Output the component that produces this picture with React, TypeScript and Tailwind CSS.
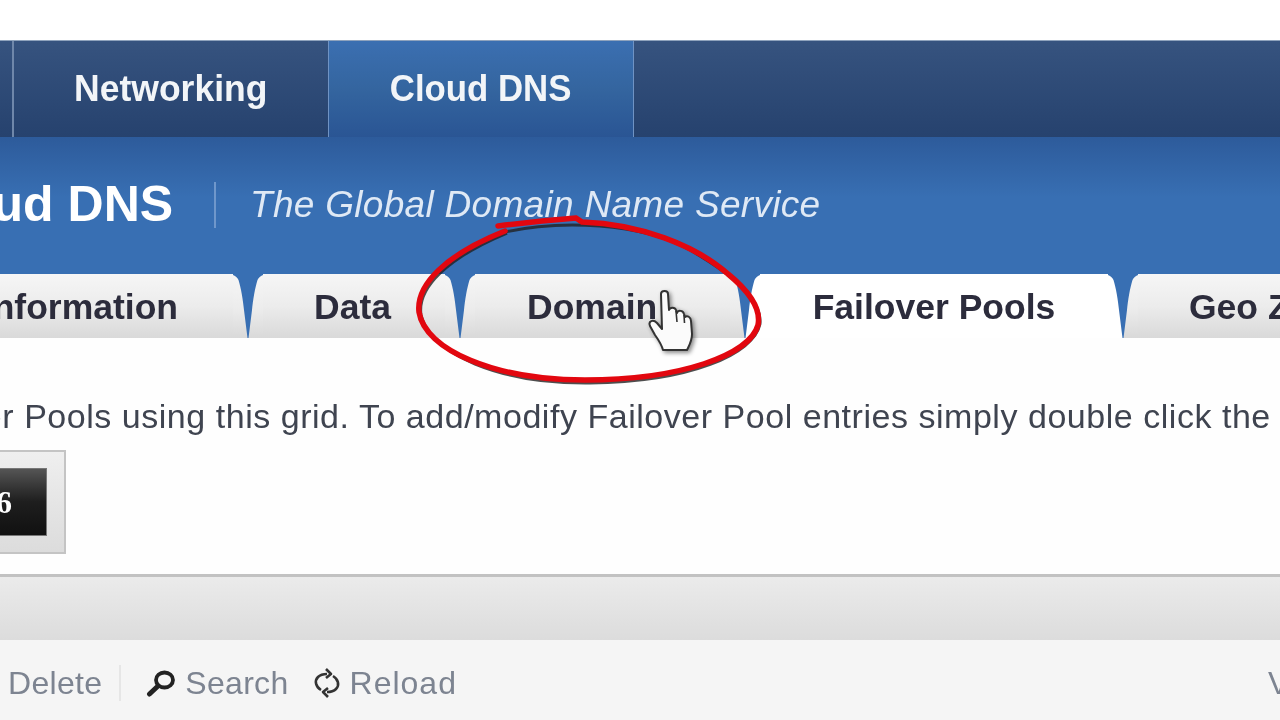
const sans = "font-['Liberation_Sans',Arial,sans-serif]";

function Notch({ left = false, right = false, id }: { left?: boolean; right?: boolean; id: string }) {
  return (
    <svg width="30" height="64" viewBox="0 0 30 64" className="shrink-0 block">
      <defs>
        <linearGradient id={id} x1="0" y1="0" x2="0" y2="1">
          <stop offset="0" stopColor="#f6f6f6" />
          <stop offset="0.55" stopColor="#ececec" />
          <stop offset="1" stopColor="#d9d9d9" />
        </linearGradient>
      </defs>
      <rect x="0" y="0" width="15" height="64" fill={left ? "#ffffff" : `url(#${id})`} />
      <rect x="15" y="0" width="15" height="64" fill={right ? "#ffffff" : `url(#${id})`} />
      <path d="M0 0 H30 V1 C27 2 25.5 4 24.5 6 C22 14 20 26 19 36 L15.5 64 H14.5 L11 36 C10 26 8 14 5.5 6 C4.5 4 3 2 0 1 Z" fill="#386fb3" />
    </svg>
  );
}

function Tab({ label, w, active = false, textClass = "justify-center" }: { label: string; w: string; active?: boolean; textClass?: string }) {
  return (
    <div
      className={`${w} ${textClass} shrink-0 h-16 flex items-center pt-1 whitespace-nowrap text-[35.5px] font-bold text-[#2c2c3c] ${
        active ? "bg-white" : "bg-gradient-to-b from-[#f6f6f6] via-[#ececec] to-[#d9d9d9]"
      }`}
    >
      {label}
    </div>
  );
}

export default function App() {
  return (
    <div className={`${sans} relative w-[1280px] h-[720px] overflow-hidden bg-white flex flex-col blur-[0.5px]`}>
      <div className="h-10 shrink-0 bg-white" />

      {/* top nav */}
      <div className="h-[97px] shrink-0 flex border-t border-[#8fa3bd] bg-gradient-to-b from-[#36537f] to-[#26426e] text-[#f2f5f8] text-[37px] font-bold">
        <div className="w-[14px] shrink-0 border-r-2 border-[#6f87aa]" />
        <div className="w-[314px] shrink-0 flex items-center justify-center">
          <span className="inline-block origin-center scale-x-[0.96] whitespace-nowrap">Networking</span>
        </div>
        <div className="w-[306px] shrink-0 flex items-center justify-center border-x border-[#6f93c4] bg-gradient-to-b from-[#3b6fb1] via-[#34659f] to-[#2a5594]">
          <span className="inline-block origin-center scale-x-[0.94] whitespace-nowrap">Cloud DNS</span>
        </div>
      </div>

      {/* blue header */}
      <div className="h-[201px] shrink-0 flex flex-col bg-gradient-to-b from-[#2d5b9b] via-[#386fb3] via-30% to-[#386fb3]">
        <div className="flex-1 flex items-center whitespace-nowrap text-white -translate-y-[1px]">
          <span className="-ml-[88px] text-[50px] font-bold w-[302px] shrink-0">Cloud DNS</span>
          <span className="w-[2px] h-[46px] bg-[#6f97cb] shrink-0" />
          <span className="ml-[34px] text-[37px] italic tracking-[0.3px] text-[#dfe9f5]">The Global Domain Name Service</span>
        </div>
        {/* tabs */}
        <div className="h-16 shrink-0 flex">
          <Tab label="Basic Information" w="w-[233px]" textClass="justify-end pr-[55px]" />
          <Notch id="n1" />
          <Tab label="Data" w="w-[182px]" textClass="justify-center pr-[3px]" />
          <Notch id="n2" />
          <Tab label="Domain" w="w-[255px]" textClass="justify-start pl-[52px]" />
          <Notch id="n3" right />
          <Tab label="Failover Pools" w="w-[348px]" active />
          <Notch id="n4" left />
          <Tab label="Geo Zones" w="w-[200px]" textClass="justify-start pl-[51px]" />
        </div>
      </div>

      {/* content */}
      <div className="h-[236px] shrink-0 bg-[#fefefe] flex flex-col">
        <p className="mt-[56px] -ml-[111px] whitespace-nowrap text-[34px] leading-[44px] text-[#3f4450] tracking-[0.53px]">
          Failover Pools using this grid. To add/modify Failover Pool entries simply double click the
        </p>
        <div className="mt-[12px] w-[66px] h-[104px] box-border border-2 border-l-0 border-[#c4c4c4] bg-gradient-to-b from-[#efefef] to-[#dcdcdc] flex items-center justify-end pr-[17px]">
          <div className="w-[47px] h-[68px] shrink-0 bg-gradient-to-b from-[#555555] via-[#1e1e1e] to-[#111111] border border-[#777] border-l-0 flex items-center overflow-hidden">
            <span className="-ml-[20px] font-['Liberation_Serif',serif] text-[32px] font-bold text-white">36</span>
          </div>
        </div>
      </div>

      {/* grid header */}
      <div className="h-[66px] shrink-0 border-t-[3px] border-[#c2c2c2] bg-gradient-to-b from-[#ebebeb] to-[#dcdcdc]" />

      {/* toolbar */}
      <div className="h-20 shrink-0 bg-[#f5f5f5] flex items-center text-[32px] text-[#7d8491] pt-[6px] whitespace-nowrap">
        <span className="ml-[8px] tracking-[0.3px]">Delete</span>
        <span className="ml-[17px] w-[2px] h-[36px] bg-[#e6e6e6] shrink-0" />
        <svg width="30" height="30" viewBox="0 0 30 30" className="ml-[25px] shrink-0" fill="none">
          <ellipse cx="18.5" cy="12" rx="8.5" ry="7.5" stroke="#222" strokeWidth="3.8" />
          <path d="M12 18 L3.5 26" stroke="#222" strokeWidth="5" strokeLinecap="round" />
        </svg>
        <span className="ml-[9px] tracking-[0.3px]">Search</span>
        <svg width="30" height="32" viewBox="0 0 30 32" className="ml-[23px] shrink-0" fill="none" stroke="#333" strokeWidth="2.6">
          <path d="M9 23 C4 20 2 14 6 10 C8 8 11 7 15 7" />
          <path d="M14 2 L19 7 L14 11" strokeLinejoin="round" />
          <path d="M21 9 C26 12 28 18 24 22 C22 24 19 25 15 25" />
          <path d="M16 21 L11 25 L16 30" strokeLinejoin="round" />
        </svg>
        <span className="ml-[8px] tracking-[1px]">Reload</span>
        <span className="ml-auto -mr-[58px] tracking-[0.3px]">View</span>
      </div>

      {/* red hand-drawn annotation */}
      <svg className="absolute left-0 top-0 pointer-events-none" width="1280" height="720" viewBox="0 0 1280 720" fill="none">
        <path
          d="M505 232 C560 220 640 222 690 250 C735 276 762 300 760 324 C754 354 690 382 590 383 C500 384 430 354 421 315 C417 288 447 258 507 233"
          stroke="#222"
          strokeWidth="3"
          opacity="0.8"
        />
        <path
          d="M498 226 C530 222 550 220 576 218 L582 222 C640 224 695 245 728 274 C750 292 761 310 758 325 C750 355 680 380 585 380 C495 380 425 350 419 312 C416 285 445 255 505 231"
          stroke="#e2070f"
          strokeWidth="5.5"
          strokeLinecap="round"
        />
        {/* hand cursor */}
        <g transform="translate(648 290)">
          <path
            d="M13 4 C13 0 20 0 20 4 L21 20 C22 17 27 17 28 20 L29 23 C30 20 35 20 36 24 L37 27 C39 25 43 27 43 31 L44 44 C44 50 42 54 40 58 L39 60 H15 C14 56 12 52 7 45 L2 36 C0 31 5 29 9 33 L14 39 Z"
            fill="#fbfbfb"
            stroke="#333"
            strokeWidth="2"
            strokeLinejoin="round"
            style={{ filter: "drop-shadow(2px 2px 2px rgba(0,0,0,0.45))" }}
          />
          <path d="M28 21 L29 32 M36 25 L36.5 33" stroke="#333" strokeWidth="1.6" />
        </g>
      </svg>
    </div>
  );
}
